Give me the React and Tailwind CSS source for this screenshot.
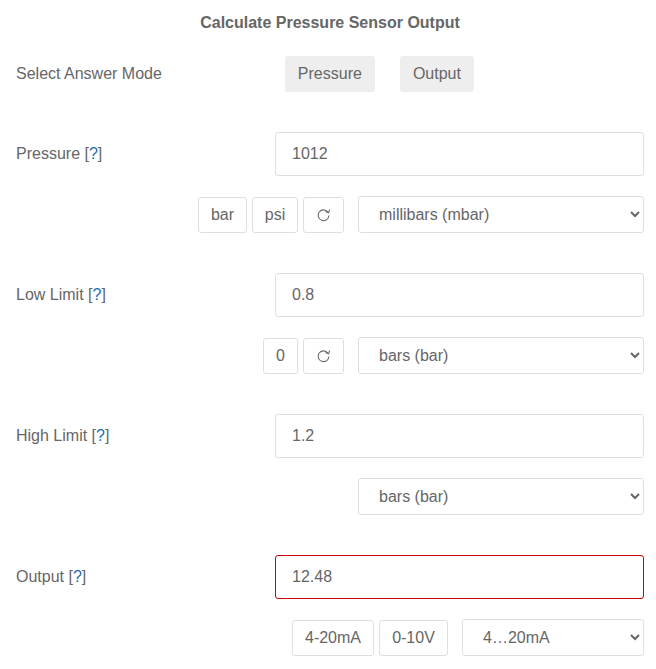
import React from "react";

const btn = "h-[36px] flex items-center justify-center whitespace-nowrap bg-white border border-[#dfdfdf] rounded-[3px] text-[#666666] text-base";
const sel = "h-[37px] bg-white border border-[#dfdfdf] rounded-[3px] text-[#666666] text-base pl-4 pr-2";

function Reset() {
  return (
    <button className={btn + " w-[41px]"}>
      <svg width="16" height="14" viewBox="0 0 16 14" fill="none" stroke="#6a6a6a" strokeWidth="1.1">
        <path d="M11.9 4.1A5.4 5.4 0 1 0 12.9 7.4" />
        <path d="M13.6 1.6L12.6 4.7L9.4 3.6" />
      </svg>
    </button>
  );
}

function Label({ text, q = true }) {
  return (
    <span className="text-[#666666] text-base">
      {text}
      {q && (
        <>
          {" ["}
          <span className="text-[#1a6fb5]">?</span>
          {"]"}
        </>
      )}
    </span>
  );
}

function Group({ label, value, error, children, last }) {
  return (
    <div className={last ? "" : "mb-[40px]"}>
      <div className="flex items-center justify-between">
        <Label text={label} />
        <input
          readOnly
          value={value}
          className={
            "w-[369px] h-[44px] px-4 bg-white border rounded-[3px] text-[#666666] text-base outline-none " +
            (error ? "border-[#cc0000]" : "border-[#dfdfdf]")
          }
        />
      </div>
      <div className="mt-[20px] flex items-center justify-end">{children}</div>
    </div>
  );
}

export default function App() {
  return (
    <div className="w-[656px] h-[669px] bg-white pl-4 pr-3 font-['Liberation_Sans',Arial,sans-serif] overflow-hidden">
      <h1 className="h-[56px] pt-[14px] text-center text-base font-bold text-[#666666] leading-[18px]">
        Calculate Pressure Sensor Output
      </h1>
      <div className="flex items-center h-[36px] mb-[40px]">
        <Label text="Select Answer Mode" q={false} />
        <div className="ml-[123px] flex gap-[25px]">
          <button className="h-[36px] px-[13px] bg-[#eeeeee] rounded-[3px] text-[#666666] text-base">Pressure</button>
          <button className="h-[36px] px-[13px] bg-[#eeeeee] rounded-[3px] text-[#666666] text-base">Output</button>
        </div>
      </div>

      <Group label="Pressure" value="1012">
        <div className="flex gap-[5px] mr-[14px]">
          <button className={btn + " w-[49px]"}>bar</button>
          <button className={btn + " w-[46px]"}>psi</button>
          <Reset />
        </div>
        <select defaultValue="mbar" className={sel + " w-[286px]"}>
          <option value="mbar">millibars (mbar)</option>
        </select>
      </Group>

      <Group label="Low Limit" value="0.8">
        <div className="flex gap-[5px] mr-[14px]">
          <button className={btn + " w-[35px]"}>0</button>
          <Reset />
        </div>
        <select defaultValue="bar" className={sel + " w-[286px]"}>
          <option value="bar">bars (bar)</option>
        </select>
      </Group>

      <Group label="High Limit" value="1.2">
        <select defaultValue="bar" className={sel + " w-[286px]"}>
          <option value="bar">bars (bar)</option>
        </select>
      </Group>

      <Group label="Output" value="12.48" error last>
        <div className="flex gap-[5px] mr-[14px]">
          <button className={btn + " w-[82px]"}>4-20mA</button>
          <button className={btn + " w-[69px]"}>0-10V</button>
        </div>
        <select defaultValue="a" className={sel + " w-[182px]"}>
          <option value="a">4…20mA</option>
        </select>
      </Group>
    </div>
  );
}
